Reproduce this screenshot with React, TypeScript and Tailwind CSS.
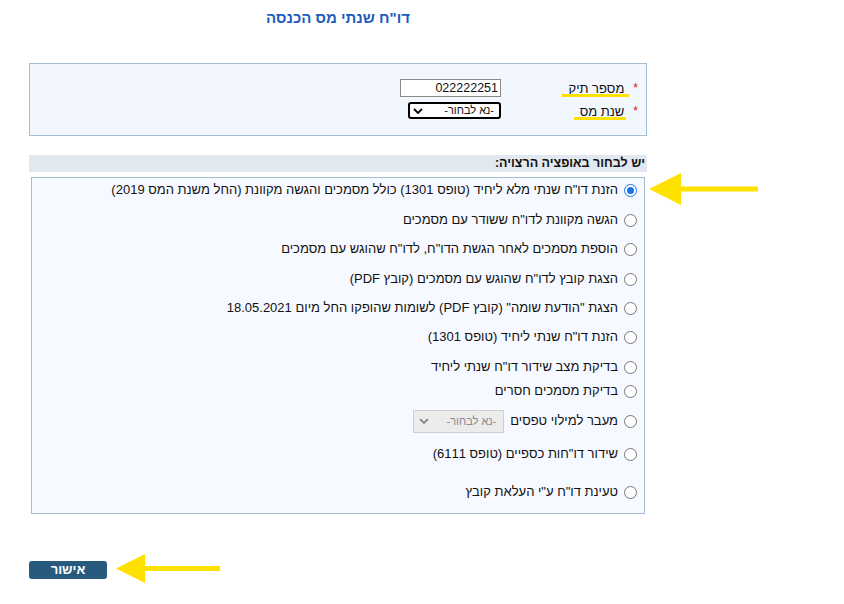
import React from "react";

const options = [
  { label: 'הזנת דו"ח שנתי מלא ליחיד (טופס 1301) כולל מסמכים והגשה מקוונת (החל משנת המס 2019)', mt: "mt-0", checked: true },
  { label: 'הגשה מקוונת לדו"ח ששודר עם מסמכים', mt: "mt-[6px]" },
  { label: 'הוספת מסמכים לאחר הגשת הדו"ח, לדו"ח שהוגש עם מסמכים', mt: "mt-[5px]" },
  { label: 'הצגת קובץ לדו"ח שהוגש עם מסמכים (קובץ PDF)', mt: "mt-[6px]" },
  { label: 'הצגת "הודעת שומה" (קובץ PDF) לשומות שהופקו החל מיום 18.05.2021', mt: "mt-[5px]" },
  { label: 'הזנת דו"ח שנתי ליחיד (טופס 1301)', mt: "mt-[5px]" },
  { label: 'בדיקת מצב שידור דו"ח שנתי ליחיד', mt: "mt-[6px]" },
  { label: "בדיקת מסמכים חסרים", mt: "mt-0" },
  { label: "מעבר למילוי טפסים", mt: "mt-[6px]", select: true },
  { label: 'שידור דו"חות כספיים (טופס 6111)', mt: "mt-[9px]" },
  { label: 'טעינת דו"ח ע"י העלאת קובץ', mt: "mt-[14px]" },
];

function Chevron({ className }: { className?: string }) {
  return (
    <svg viewBox="0 0 10 6" className={className} fill="none" stroke="currentColor" strokeWidth="1.8">
      <path d="M1 1l4 4 4-4" />
    </svg>
  );
}

function Arrow({ className, w, h }: { className: string; w: number; h: number }) {
  const head = h;
  const mid = h / 2;
  return (
    <svg className={className} width={w} height={h} viewBox={`0 0 ${w} ${h}`}>
      <polygon points={`0,${mid} ${head},0 ${head},${h}`} fill="#ffe100" />
      <rect x={head - 2} y={mid - 2.5} width={w - head + 2} height={5} fill="#ffe100" />
    </svg>
  );
}

export default function App() {
  return (
    <div className="relative h-[604px] w-[844px] bg-white text-[13px] text-[#111] font-['Liberation_Sans',Arial,sans-serif]">
      <div dir="rtl" className="ml-[29px] w-[618px] pt-[9px]">
        <h1 className="text-center text-[15px] font-bold leading-[18px] text-[#1d5bbf]">
          דו"ח שנתי מס הכנסה
        </h1>

        <div className="mt-[36px] border border-[#a3bcd3] bg-[#f2f7fe] pb-[16px] pt-[15px]">
          <div className="flex h-[18px] items-center">
            <div className="flex w-[145px] items-center pr-[8px]">
              <span className="text-[12px] text-[#e01010]">*</span>
              <span className="relative mr-[9px] mt-[2px] text-[13px]">
                מספר תיק
                <span className="absolute -left-[6px] -right-[5px] top-[15px] h-[3px] bg-[#ffe100]" />
              </span>
            </div>
            <div className="flex h-[18px] w-[101px] items-center border border-[#8a8a8a] bg-white px-[2px] text-[12.5px]">
              022222251
            </div>
          </div>
          <div className="mt-[5px] flex h-[17px] items-center">
            <div className="flex w-[145px] items-center pr-[8px]">
              <span className="text-[12px] text-[#e01010]">*</span>
              <span className="relative mr-[9px] mt-[2px] text-[13px]">
                שנת מס
                <span className="absolute -left-[6px] -right-[2px] top-[15px] h-[3px] bg-[#ffe100]" />
              </span>
            </div>
            <div className="flex h-[17px] w-[93px] items-center justify-between rounded-[3px] border-2 border-black bg-white pl-[3px] pr-[5px] text-[11px]">
              <span>-נא לבחור-</span>
              <Chevron className="h-[6px] w-[10px] text-black" />
            </div>
          </div>
        </div>

        <div className="mt-[19px] flex h-[17px] items-center bg-[#e1e8f0] pr-[2px] text-[12.5px] font-bold">
          יש לבחור באופציה הרצויה:
        </div>

        <div className="mx-[2px] mt-[5px] border border-[#a3bcd3] bg-[#f6f9ff] pb-[9px]">
          {options.map((o) => (
            <div key={o.label} className={`flex h-[24px] items-center pr-[7px] ${o.mt}`}>
              <span
                className={`flex h-[13px] w-[13px] shrink-0 items-center justify-center rounded-full border bg-white ${
                  o.checked ? "border-[#1a73e8]" : "border-[#767676]"
                }`}
              >
                {o.checked && <span className="h-[7px] w-[7px] rounded-full bg-[#1a73e8]" />}
              </span>
              <span className="mr-[6px] whitespace-nowrap">{o.label}</span>
              {o.select && (
                <div className="mr-[6px] flex h-[23px] w-[91px] items-center justify-between border border-[#cfcfcf] bg-[#ececec] pl-[5px] pr-[7px] text-[11px] text-[#8a8a8a]">
                  <span>-נא לבחור-</span>
                  <Chevron className="h-[6px] w-[10px] text-[#8a8a8a]" />
                </div>
              )}
            </div>
          ))}
        </div>

        <button className="mr-auto mt-[47px] flex h-[18px] w-[78px] items-center justify-center rounded-[3px] bg-[#285a7e] text-[13px] font-bold text-white">
          אישור
        </button>
      </div>

      <Arrow className="absolute left-[649px] top-[173px]" w={109} h={32} />
      <Arrow className="absolute left-[116px] top-[554px]" w={104} h={29} />
    </div>
  );
}
